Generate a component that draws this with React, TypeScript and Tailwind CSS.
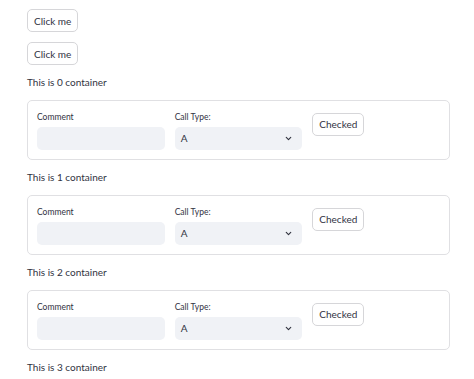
import { ChevronDown } from "lucide-react";

function Btn({ label }: { label: string }) {
  return (
    <button className="h-[23px] w-fit rounded-[5px] border border-[#d6d6d9] bg-white px-[6px] text-[10px] leading-none text-[#31333f]">
      {label}
    </button>
  );
}

function Row() {
  return (
    <div className="rounded-[5px] border border-[#e0e0e3] px-[9px] py-[9px]">
      <div className="grid grid-cols-3 gap-[10px]">
        <div>
          <div className="h-[17px] text-[8.5px] leading-[14px] text-[#31333f]">Comment</div>
          <div className="h-[23px] rounded-[5px] bg-[#f0f2f6]" />
        </div>
        <div>
          <div className="h-[17px] text-[8.5px] leading-[14px] text-[#31333f]">Call Type:</div>
          <div className="flex h-[23px] items-center justify-between rounded-[5px] bg-[#f0f2f6] pl-[6px] pr-[9px] text-[10px] text-[#31333f]">
            <span>A</span>
            <ChevronDown size={9} strokeWidth={3} />
          </div>
        </div>
        <div>
          <Btn label="Checked" />
        </div>
      </div>
    </div>
  );
}

export default function App() {
  return (
    <div
      className="flex min-h-[379px] flex-col gap-[10px] bg-white pl-[27px] pr-[24px] pt-[9px] text-[#31333f]"
      style={{ fontFamily: "Lato, 'Open Sans', sans-serif" }}
    >
      <Btn label="Click me" />
      <Btn label="Click me" />
      {[0, 1, 2, 3].map((i) => (
        <div key={i} className="flex flex-col gap-[10px]">
          <p className="h-[15px] text-[10px] leading-[15px]">This is {i} container</p>
          {i < 3 ? <Row /> : null}
        </div>
      ))}
    </div>
  );
}
